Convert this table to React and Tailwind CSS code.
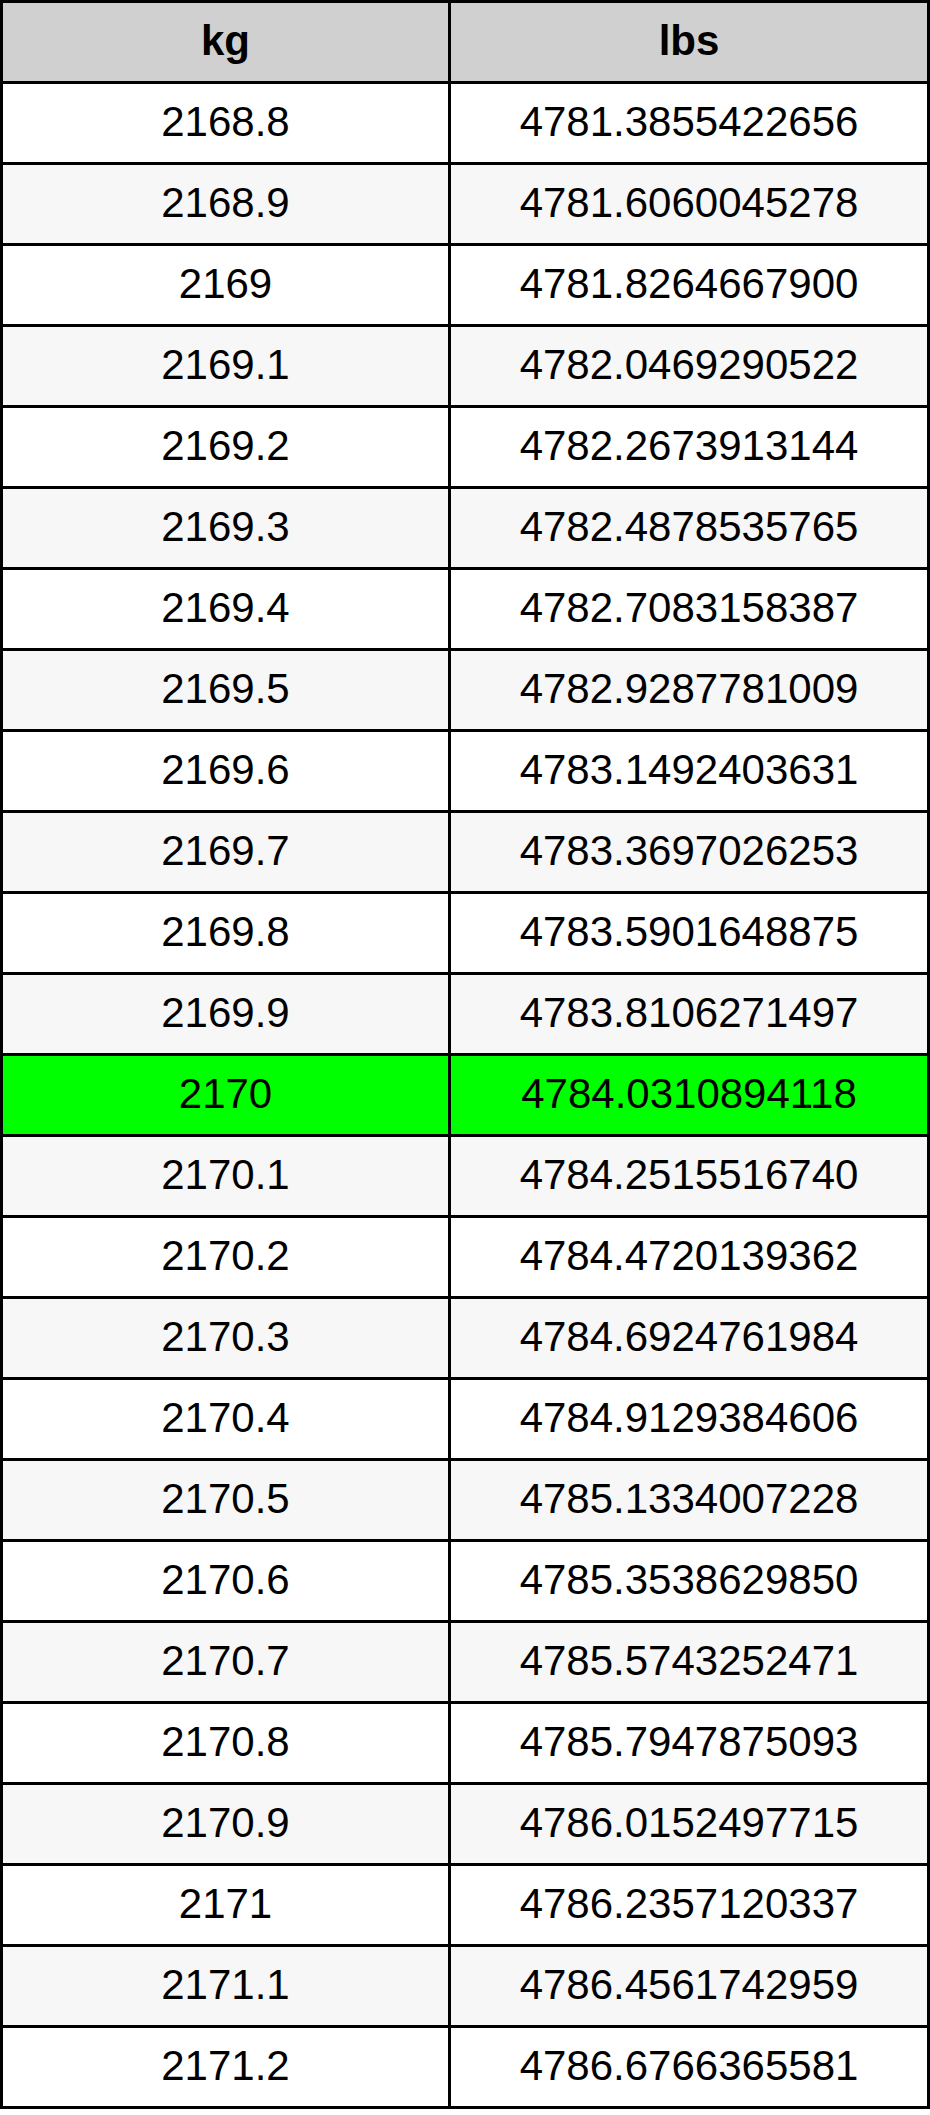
import React from 'react';

const rows = [
  ['2168.8', '4781.3855422656'],
  ['2168.9', '4781.6060045278'],
  ['2169', '4781.8264667900'],
  ['2169.1', '4782.0469290522'],
  ['2169.2', '4782.2673913144'],
  ['2169.3', '4782.4878535765'],
  ['2169.4', '4782.7083158387'],
  ['2169.5', '4782.9287781009'],
  ['2169.6', '4783.1492403631'],
  ['2169.7', '4783.3697026253'],
  ['2169.8', '4783.5901648875'],
  ['2169.9', '4783.8106271497'],
  ['2170', '4784.0310894118'],
  ['2170.1', '4784.2515516740'],
  ['2170.2', '4784.4720139362'],
  ['2170.3', '4784.6924761984'],
  ['2170.4', '4784.9129384606'],
  ['2170.5', '4785.1334007228'],
  ['2170.6', '4785.3538629850'],
  ['2170.7', '4785.5743252471'],
  ['2170.8', '4785.7947875093'],
  ['2170.9', '4786.0152497715'],
  ['2171', '4786.2357120337'],
  ['2171.1', '4786.4561742959'],
  ['2171.2', '4786.6766365581'],
];

const App = () => {
  return (
    <div className="w-[930px] bg-white font-['Liberation_Sans',Arial,sans-serif] text-black">
      <div className="grid grid-cols-[445px_476px] gap-[3px] p-[3px] bg-black">
        {/* header */}
        <div className="h-[78px] pb-[3px] flex items-center justify-center bg-[#d0d0d0] text-[42px] font-bold">kg</div>
        <div className="h-[78px] pb-[3px] flex items-center justify-center bg-[#d0d0d0] text-[42px] font-bold">lbs</div>

        {rows.map(([kg, lbs], i) => {
          const bg = kg === '2170' ? 'bg-[#00ff00]' : i % 2 === 0 ? 'bg-white' : 'bg-[#f7f7f7]';
          return (
            <React.Fragment key={kg}>
              <div className={`h-[78px] pb-[3px] flex items-center justify-center text-[42px] ${bg}`}>{kg}</div>
              <div className={`h-[78px] pb-[3px] flex items-center justify-center text-[42px] ${bg}`}>{lbs}</div>
            </React.Fragment>
          );
        })}
      </div>
    </div>
  );
};

export default App;
